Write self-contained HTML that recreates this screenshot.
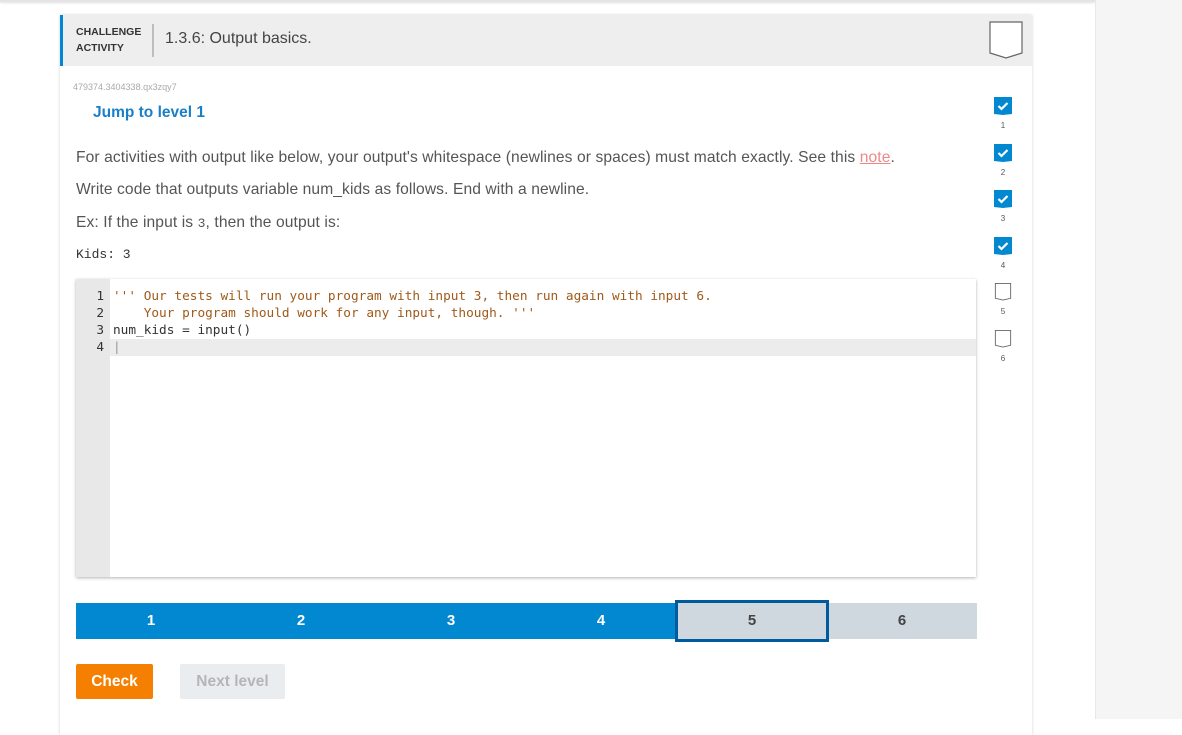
<!DOCTYPE html>
<html><head><meta charset="utf-8"><style>
*{margin:0;padding:0;box-sizing:border-box}
body{width:1182px;height:719px;overflow:hidden;background:#fff;font-family:"Liberation Sans",sans-serif;position:relative}
.topbar{position:absolute;left:0;top:0;width:1095px;height:2px;background:#e4e4e4;box-shadow:0 1px 2px #ddd}
.rightpanel{position:absolute;left:1095px;top:0;width:87px;height:719px;background:#f5f5f5;border-left:1px solid #e8e8e8}
.card{position:absolute;left:60px;top:15px;width:972px;height:720px;background:#fff;box-shadow:0 0 3px rgba(0,0,0,.18)}
.hdr{position:absolute;left:0;top:0;width:972px;height:51px;background:#eeeeee;border-left:3px solid #0288d1}
.ca{position:absolute;left:13px;top:9px;font-size:10.5px;font-weight:bold;color:#333;line-height:16px}
.sep{position:absolute;left:89px;top:9px;width:2px;height:33px;background:#bdbdbd}
.ttl{position:absolute;left:102px;top:15px;font-size:16px;color:#444}
.id{position:absolute;left:13px;top:67px;font-size:9px;color:#aaa}
.jump{position:absolute;left:33px;top:89px;font-size:15.5px;font-weight:bold;color:#1a7fc9}
.p{position:absolute;left:16px;font-size:15.6px;color:#555;white-space:nowrap;letter-spacing:0.1px}
.p a{color:#e88;text-decoration:underline}
.mono{font-family:"Liberation Mono","DejaVu Sans Mono",monospace}
.editor{position:absolute;left:16px;top:264px;width:900px;height:298px;background:#fff;box-shadow:0 1px 3px rgba(0,0,0,.3)}
.gut{position:absolute;left:0;top:0;width:34px;height:298px;background:#e8e8e8}
.ln{position:absolute;font-family:"DejaVu Sans Mono",monospace;font-size:12.75px;line-height:17px;white-space:pre}
.active{position:absolute;left:34px;top:60px;width:866px;height:17px;background:#ececec}
.bar{position:absolute;top:588px;height:36px;width:150px;background:#0288d1;color:#fff;font-weight:bold;font-size:15px;text-align:center;line-height:36px}
.btn{position:absolute;top:649px;height:35px;font-weight:bold;font-size:15.5px;text-align:center;line-height:35px;border-radius:2px}
.chk{position:absolute;left:934px;width:18px;height:18px}
.num{position:absolute;left:934px;width:18px;text-align:center;font-size:8px;color:#555}
</style></head><body>
<div class="topbar"></div>
<div class="rightpanel"></div>
<div class="card">
 <div class="hdr">
  <div class="ca">CHALLENGE<br>ACTIVITY</div>
  <div class="sep"></div>
  <div class="ttl">1.3.6: Output basics.</div>
  <svg style="position:absolute;left:926px;top:6px" width="34" height="38" viewBox="0 0 34 38"><path d="M1 1H33V32L17 37L1 32Z" fill="#fff" stroke="#666" stroke-width="1.2"/></svg>
 </div>
 <div class="id">479374.3404338.qx3zqy7</div>
 <div class="jump">Jump to level 1</div>
 <div class="p" style="top:134px">For activities with output like below, your output's whitespace (newlines or spaces) must match exactly. See this <a>note</a>.</div>
 <div class="p" style="top:166px">Write code that outputs variable num_kids as follows. End with a newline.</div>
 <div class="p" style="top:199px">Ex: If the input is <span class="mono" style="font-size:13px">3</span>, then the output is:</div>
 <div class="p mono" style="top:232px;font-size:13px;color:#333;letter-spacing:0">Kids: 3</div>
 <div class="editor">
  <div class="gut"></div>
  <div class="active"></div>
  <div class="ln" style="left:0;top:9px;width:28px;text-align:right;color:#333">1
2
3
4</div>
  <div class="ln" style="left:37px;top:9px;color:#333"><span style="color:#a05a1a">''' Our tests will run your program with input 3, then run again with input 6.
    Your program should work for any input, though. '''</span>
num_kids = input()
<span style="color:#999">|</span></div>
 </div>
 <div class="bar" style="left:16px">1</div>
 <div class="bar" style="left:166px">2</div>
 <div class="bar" style="left:316px">3</div>
 <div class="bar" style="left:466px">4</div>
 <div class="bar" style="left:767px;background:#cfd8df;color:#444;width:150px">6</div>
 <div class="bar" style="left:615px;background:#cfd8df;color:#444;border:3px solid #005a9e;line-height:36px;top:585px;height:42px;width:154px">5</div>
 <div class="btn" style="left:16px;width:77px;background:#f57f00;color:#fff">Check</div>
 <div class="btn" style="left:120px;width:105px;background:#eaedf0;color:#b5b5b5">Next level</div>

 <svg class="chk" style="top:82px" viewBox="0 0 18 18"><path d="M0 0H18V17L9 18L0 17Z" fill="#0288d1"/><path d="M4.5 9L7.5 12L13.5 6" fill="none" stroke="#fff" stroke-width="2.2"/></svg>
 <div class="num" style="top:106px">1</div>
 <svg class="chk" style="top:129px" viewBox="0 0 18 18"><path d="M0 0H18V17L9 18L0 17Z" fill="#0288d1"/><path d="M4.5 9L7.5 12L13.5 6" fill="none" stroke="#fff" stroke-width="2.2"/></svg>
 <div class="num" style="top:153px">2</div>
 <svg class="chk" style="top:175px" viewBox="0 0 18 18"><path d="M0 0H18V17L9 18L0 17Z" fill="#0288d1"/><path d="M4.5 9L7.5 12L13.5 6" fill="none" stroke="#fff" stroke-width="2.2"/></svg>
 <div class="num" style="top:199px">3</div>
 <svg class="chk" style="top:222px" viewBox="0 0 18 18"><path d="M0 0H18V17L9 18L0 17Z" fill="#0288d1"/><path d="M4.5 9L7.5 12L13.5 6" fill="none" stroke="#fff" stroke-width="2.2"/></svg>
 <div class="num" style="top:246px">4</div>
 <svg class="chk" style="top:268px" viewBox="0 0 18 20"><path d="M0.5 0.5H17.5V17L9 19L0.5 17Z" fill="#fff" stroke="#666"/></svg>
 <div class="num" style="top:292px">5</div>
 <svg class="chk" style="top:315px" viewBox="0 0 18 20"><path d="M0.5 0.5H17.5V17L9 19L0.5 17Z" fill="#fff" stroke="#666"/></svg>
 <div class="num" style="top:339px">6</div>
</div>
</body></html>
